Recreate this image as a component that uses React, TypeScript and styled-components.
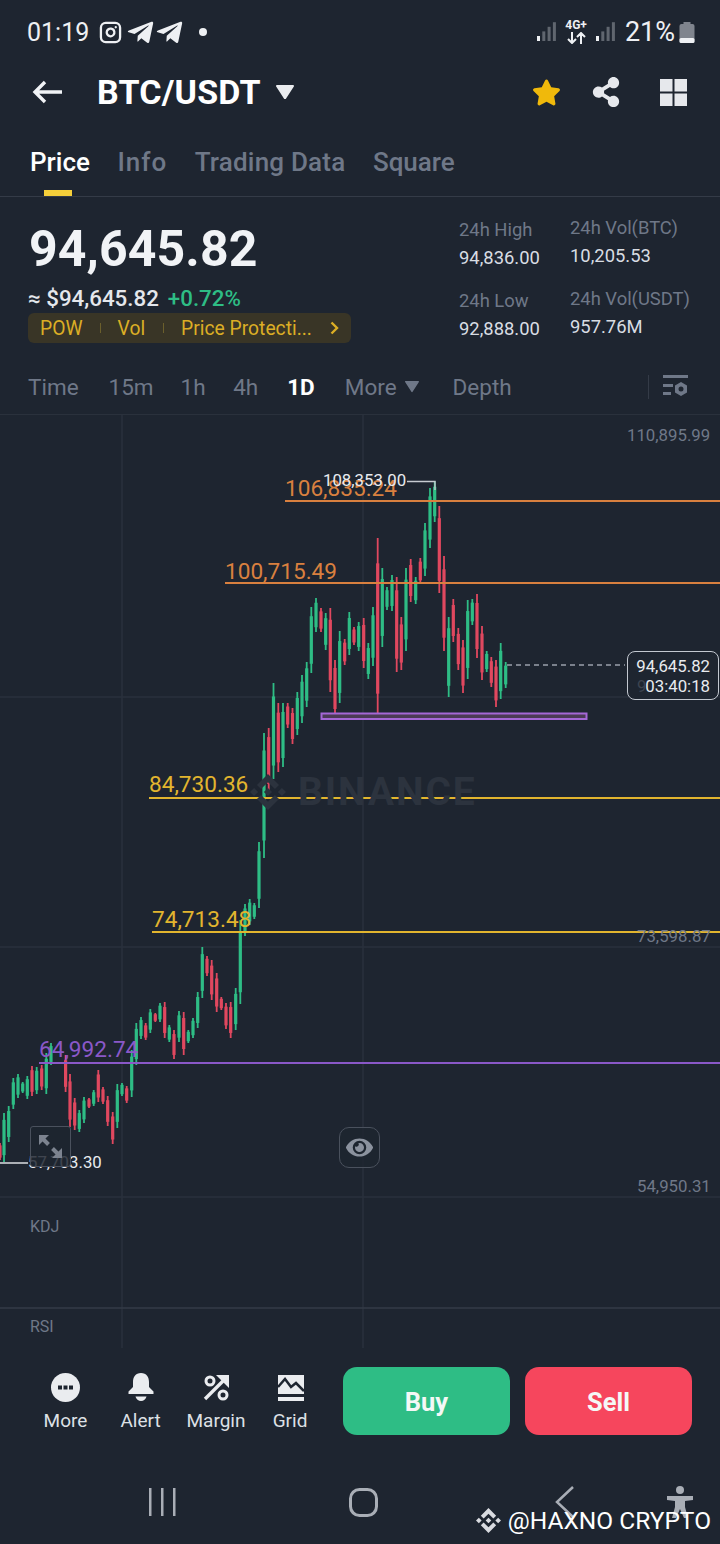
import React from "react";
import styled, { createGlobalStyle } from "styled-components";
import { FaTelegramPlane, FaStar, FaShareAlt, FaEye } from "react-icons/fa";
import { SiBinance } from "react-icons/si";
import { Instagram } from "lucide-react";

const BG = "#1e2530";
const GREEN = "#2ebd85";
const RED = "#e0485f";

type Candle = [number, "g" | "r", number, number];

const candles: Candle[] = [
  [0, "r", 1143, 1160], [4, "g", 1113, 1162], [8.7, "g", 1106, 1142], [13.3, "g", 1078, 1109],
  [18, "g", 1074, 1098], [22.7, "g", 1082, 1093], [27.3, "g", 1076, 1099], [32, "r", 1066, 1096],
  [36.7, "g", 1067, 1094], [41.7, "r", 1065, 1090], [46.3, "g", 1053, 1094], [51, "g", 1043, 1065],
  [65.6, "r", 1055, 1092], [70, "r", 1074, 1127], [74.7, "r", 1098, 1130], [79.3, "g", 1110, 1132],
  [84, "g", 1097, 1123], [89, "r", 1098, 1108], [93.7, "g", 1090, 1106], [98.3, "r", 1070, 1102],
  [103, "r", 1087, 1104], [107.7, "r", 1096, 1126], [112.7, "r", 1112, 1144], [117.3, "g", 1084, 1128],
  [122, "g", 1083, 1096], [126.7, "r", 1086, 1103], [131.7, "g", 1050, 1097], [136.3, "g", 1023, 1065],
  [141, "g", 1017, 1039], [145.7, "r", 1023, 1040], [150.3, "g", 1009, 1033], [155.3, "r", 1013, 1022],
  [160, "g", 1003, 1022], [164.7, "r", 1002, 1038], [169.3, "g", 1025, 1042], [174, "r", 1030, 1059],
  [179, "g", 1011, 1042], [183.7, "r", 1012, 1055], [188.3, "g", 1030, 1043], [193, "g", 1018, 1038],
  [197.7, "g", 992, 1028], [202.3, "g", 947, 998], [207, "r", 956, 976], [211.7, "r", 960, 1000],
  [216.7, "r", 973, 1012], [221.3, "r", 997, 1010], [226, "r", 1003, 1029], [230.7, "r", 1002, 1038],
  [235.7, "g", 988, 1030], [240.3, "g", 920, 1004], [245, "g", 904, 936], [249.7, "g", 899, 925],
  [254.3, "g", 903, 919], [259, "g", 842, 908], [264, "g", 733, 858], [268.7, "r", 728, 793],
  [273.5, "g", 683, 779], [278.3, "r", 703, 772], [283, "g", 703, 767], [287.7, "r", 703, 728],
  [292.5, "r", 708, 744], [297.3, "g", 692, 735], [302, "g", 675, 723], [306.7, "g", 662, 707],
  [311.3, "g", 607, 673], [316, "g", 598, 632], [321, "r", 608, 632], [325.7, "g", 613, 650],
  [330.3, "r", 608, 692], [335, "r", 660, 717], [339.7, "g", 631, 703], [344.7, "r", 639, 665],
  [349.3, "g", 612, 655], [354, "r", 627, 645], [358.7, "g", 622, 651], [363.7, "r", 618, 668],
  [368.3, "g", 643, 679], [373, "g", 607, 666], [377.7, "r", 538, 719], [382.3, "g", 568, 647],
  [387, "g", 587, 610], [392, "g", 575, 611], [396.7, "r", 577, 672], [401.3, "r", 617, 670],
  [406, "g", 568, 651], [410.7, "r", 559, 602], [415.7, "g", 577, 604], [420.3, "r", 558, 584],
  [425, "g", 523, 576], [430, "g", 488, 548], [434.7, "g", 481, 522], [439.3, "r", 506, 593],
  [444, "r", 556, 651], [448.7, "g", 617, 697], [453.3, "r", 599, 642], [458.3, "r", 628, 670],
  [463, "r", 640, 693], [467.7, "g", 600, 679], [472.3, "g", 599, 625], [477, "r", 594, 658],
  [482, "r", 626, 680], [486.7, "g", 651, 672], [491.3, "r", 657, 687], [496, "r", 660, 707],
  [500.7, "g", 643, 699], [505.7, "g", 662, 688],
];

const GlobalStyle = createGlobalStyle`
  html, body {
    margin: 0;
    background: ${BG};
  }
  * {
    box-sizing: border-box;
  }
`;

const Page = styled.div`
  position: relative;
  width: 720px;
  height: 1544px;
  overflow: hidden;
  display: flex;
  flex-direction: column;
  background: ${BG};
  color: #eaecef;
  font-family: Roboto, "Liberation Sans", sans-serif;
`;

const StatusBar = styled.div`
  height: 64px;
  padding: 0 25px 0 27px;
  display: flex;
  align-items: center;
  justify-content: space-between;
  color: #eef0f3;
`;

const StatusGroup = styled.div`
  display: flex;
  align-items: center;
`;

const Clock = styled.span`
  font-size: 25px;
  margin-right: 10px;
`;

const Percent = styled.span`
  font-size: 27px;
  margin: 0 4px 0 10px;
`;

const NetLabel = styled.div`
  margin: 0 9px;
  display: flex;
  flex-direction: column;
  align-items: center;
  gap: 1px;
  font-size: 12px;
  font-weight: 700;
  line-height: 11px;
`;

const Dot = styled.span`
  width: 8px;
  height: 8px;
  margin-left: 15px;
  border-radius: 50%;
  background: #eef0f3;
`;

const Header = styled.div`
  height: 56px;
  padding: 0 33px 0 32px;
  display: flex;
  align-items: center;
`;

const Pair = styled.h1`
  margin: 0 15px 0 35px;
  font-size: 34px;
  font-weight: 700;
  letter-spacing: 0.2px;
  color: #fff;
`;

const HeaderActions = styled.div`
  margin-left: auto;
  display: flex;
  align-items: center;
  gap: 30px;
`;

const GridSlot = styled.span`
  margin-left: 9px;
  display: flex;
`;

const Tabs = styled.div`
  height: 77px;
  padding: 8px 0 0 30px;
  display: flex;
  align-items: center;
  gap: 27.5px;
  border-bottom: 1px solid #343b47;
`;

const Tab = styled.span<{ $active?: boolean; $tracking?: number }>`
  position: relative;
  font-size: 26px;
  font-weight: 500;
  letter-spacing: ${(p) => p.$tracking ?? 0}px;
  color: ${(p) => (p.$active ? "#fff" : "#6f7888")};

  ${(p) =>
    p.$active &&
    `&::after {
      content: "";
      position: absolute;
      left: 14px;
      bottom: -19px;
      width: 28px;
      height: 6px;
      background: #f5cf3a;
    }`}
`;

const Summary = styled.div`
  height: 168px;
  padding: 19px 0 0 28px;
  display: flex;
`;

const PriceColumn = styled.div`
  width: 431px;
`;

const BigPrice = styled.div`
  margin-left: 1px;
  font-size: 50px;
  line-height: 66px;
  font-weight: 700;
  letter-spacing: 0.1px;
  color: #f1f3f6;
`;

const FiatLine = styled.div`
  margin-top: 4px;
  height: 24px;
  display: flex;
  gap: 9px;
  font-size: 22.3px;
  line-height: 24px;
  font-weight: 500;
  color: #e4e7ec;
`;

const Change = styled.span`
  color: ${GREEN};
`;

const TagRow = styled.div`
  margin-top: 3px;
  width: 323px;
  height: 30px;
  padding: 0 12px;
  display: flex;
  align-items: center;
  border-radius: 6px;
  background: #393526;
  color: #dcae25;
  font-size: 19.3px;
`;

const TagDivider = styled.span<{ $gap: number }>`
  width: 1px;
  height: 10px;
  margin: 0 ${(p) => p.$gap}px;
  background: #6b5f2c;
`;

const TagArrow = styled.span`
  margin-left: auto;
  display: flex;
`;

const Stats = styled.div`
  display: grid;
  grid-template-columns: 111px 1fr;
  grid-auto-rows: 71px;
`;

const Stat = styled.div<{ $shift?: number }>`
  display: flex;
  flex-direction: column;
  gap: 5px;
  margin-top: ${(p) => p.$shift ?? 0}px;
`;

const StatLabel = styled.span`
  font-size: 18.4px;
  line-height: 23px;
  color: #6f7888;
`;

const StatValue = styled.span`
  font-size: 18.4px;
  line-height: 23px;
  color: #d9dde3;
`;

const Intervals = styled.div`
  height: 50px;
  padding: 0 32px 5px 28px;
  display: flex;
  align-items: center;
  border-bottom: 1px solid #2a313c;
`;

const Interval = styled.span<{ $active?: boolean; $gap?: number }>`
  margin-right: ${(p) => p.$gap ?? 29}px;
  font-size: 22.5px;
  font-weight: ${(p) => (p.$active ? 700 : 400)};
  color: ${(p) => (p.$active ? "#fff" : "#6f7888")};
  display: flex;
  align-items: center;
  gap: 8px;
`;

const ToolGroup = styled.div`
  margin-left: auto;
  display: flex;
  align-items: center;
  gap: 14px;
`;

const ToolDivider = styled.span`
  width: 1px;
  height: 24px;
  background: #343b47;
`;

const Chart = styled.div`
  position: relative;
  height: 933px;
`;

const ChartCanvas = styled.svg`
  display: block;
`;

const ChartText = styled.text<{ $size: number; $fill: string }>`
  font-family: Roboto, "Liberation Sans", sans-serif;
  font-size: ${(p) => p.$size}px;
  fill: ${(p) => p.$fill};
`;

const PriceTag = styled.div`
  position: absolute;
  left: 627px;
  top: 236px;
  width: 92px;
  height: 49px;
  padding-right: 8px;
  border: 1px solid #c3c8d0;
  border-radius: 8px;
  background: ${BG};
  font-size: 16.8px;
  line-height: 20px;
  text-align: right;
  display: flex;
  flex-direction: column;
  justify-content: center;
  color: #e8ebef;
`;

const GhostDigit = styled.span`
  position: absolute;
  left: 9px;
  top: 24px;
  color: #3c434f;
`;

const OverlayButton = styled.div<{ $x: number; $y: number; $radius: number }>`
  position: absolute;
  left: ${(p) => p.$x}px;
  top: ${(p) => p.$y}px;
  width: 41px;
  height: 41px;
  display: flex;
  align-items: center;
  justify-content: center;
  border: 1px solid #4a515d;
  border-radius: ${(p) => p.$radius}px;
  background: rgba(30, 37, 48, 0.84);
  color: #8b929e;
`;

const Watermark = styled.div`
  position: absolute;
  left: 250px;
  top: 354px;
  display: flex;
  align-items: center;
  gap: 12px;
  font-size: 39px;
  font-weight: 700;
  letter-spacing: 1.9px;
  color: #2c333e;
`;

const ActionBar = styled.div`
  height: 112px;
  padding: 19px 28px 0 0;
  display: flex;
  align-items: flex-start;
`;

const Shortcuts = styled.div`
  width: 343px;
  padding: 1px 0 0 28px;
  display: flex;
`;

const Shortcut = styled.div<{ $width: number }>`
  width: ${(p) => p.$width}px;
  display: flex;
  flex-direction: column;
  align-items: center;
  gap: 3px;
  font-size: 19px;
  line-height: 24px;
  color: #dde0e5;
`;

const ShortcutIcon = styled.div`
  height: 38px;
  display: flex;
  align-items: center;
  justify-content: center;
  color: #eaecef;
`;

const TradeButton = styled.button<{ $color: string }>`
  flex: 1;
  height: 68px;
  padding-top: 3px;
  border: 0;
  border-radius: 14px;
  background: ${(p) => p.$color};
  color: #f4f8f6;
  font-family: inherit;
  font-size: 25.5px;
  font-weight: 700;
`;

const TradeButtons = styled.div`
  flex: 1;
  display: flex;
  gap: 15px;
`;

const NavBar = styled.div`
  position: relative;
  flex: 1;
  display: flex;
  align-items: center;
  color: #a9aeb6;
`;

const NavSlot = styled.div<{ $width: number }>`
  width: ${(p) => p.$width}px;
  display: flex;
  justify-content: flex-end;
`;

const Handle = styled.div`
  position: absolute;
  right: 9px;
  bottom: 9px;
  display: flex;
  align-items: center;
  gap: 7px;
  font-size: 24.5px;
  color: #fff;
`;

const HandleLogo = styled.span`
  display: flex;
  color: #d9dbe0;
`;

const Signal = ({ level }: { level: number }) => (
  <svg width="19" height="20" viewBox="0 0 19 20">
    {[0, 1, 2, 3].map((i) => (
      <rect
        key={i}
        x={i * 5.3}
        y={14 - i * 4.6}
        width="3"
        height={5 + i * 4.6}
        fill={i < level ? "#eef0f3" : "#60666f"}
      />
    ))}
  </svg>
);

const NetArrows = () => (
  <svg width="19" height="12" viewBox="0 0 19 12" fill="none" stroke="#eef0f3" strokeWidth="2">
    <path d="M5 0v11M1 7l4 4 4-4M14 12V1M10 5l4-4 4 4" />
  </svg>
);

const Battery = () => (
  <svg width="16" height="21" viewBox="0 0 16 21">
    <rect x="4.5" y="0" width="7" height="3" fill="#80858e" />
    <rect x="0.5" y="2" width="15" height="19" rx="2" fill="#80858e" />
    <rect x="0.5" y="16" width="15" height="5" rx="1.5" fill="#eef0f3" />
  </svg>
);

const BackArrow = () => (
  <svg width="30" height="24" viewBox="0 0 30 24" fill="none" stroke="#f1f3f6" strokeWidth="3.4">
    <path d="M30 12H3M13 2 3 12l10 10" />
  </svg>
);

const Caret = ({ size, color }: { size: number; color: string }) => (
  <svg width={size} height={size * 0.8} viewBox="0 0 10 8">
    <path d="M0.5 0.5h9L5 7.5z" fill={color} stroke={color} strokeLinejoin="round" />
  </svg>
);

const GridIcon = () => (
  <svg width="27" height="27" viewBox="0 0 27 27" fill="#e6e8ec">
    <rect width="12.5" height="12.5" />
    <rect x="14.5" width="12.5" height="12.5" />
    <rect y="14.5" width="12.5" height="12.5" />
    <rect x="14.5" y="14.5" width="12.5" height="12.5" />
  </svg>
);

const IndicatorIcon = () => (
  <svg width="25" height="24" viewBox="0 0 25 24" fill="#6f7888">
    <rect x="0" y="0" width="25" height="3" />
    <rect x="0" y="9" width="10" height="3" />
    <rect x="0" y="17" width="8" height="3" />
    <path d="M18 7l6 3.5v7L18 21l-6-3.5v-7zM18 11.5a2.5 2.5 0 1 0 0 5 2.5 2.5 0 0 0 0-5z" fillRule="evenodd" />
  </svg>
);

const ExpandIcon = () => (
  <svg width="25" height="25" viewBox="0 0 25 25" fill="#7c838f">
    <path d="M1 1h10L1 11z" />
    <path d="M24 24H14l10-10z" />
    <path d="M5 5l5.500 5.500M14.500 14.500 20 20" stroke="#7c838f" strokeWidth="4" />
  </svg>
);

const MoreIcon = () => (
  <svg width="29" height="29" viewBox="0 0 29 29">
    <circle cx="14.5" cy="14.5" r="14.5" fill="#eaecef" />
    <rect x="7" y="12.500" width="4" height="4" fill={BG} />
    <rect x="12.500" y="12.500" width="4" height="4" fill={BG} />
    <rect x="18" y="12.500" width="4" height="4" fill={BG} />
  </svg>
);

const BellIcon = () => (
  <svg width="26" height="28" viewBox="0 0 26 28" fill="#eaecef">
    <path d="M13 0c5.500 0 8 4 8 9v5l4.500 4.500V21H.5v-2.500L5 14V9c0-5 2.500-9 8-9z" />
    <path d="M7.500 23.500h11C18 26 15.500 28 13 28s-5-2-5.500-4.500z" />
  </svg>
);

const MarginIcon = () => (
  <svg width="27" height="27" viewBox="0 0 27 27" fill="none">
    <path d="M2 25 20 7" stroke="#eaecef" strokeWidth="3.400" />
    <path d="M13 1h13v13z" fill="#eaecef" />
    <circle cx="7" cy="7" r="4" stroke="#eaecef" strokeWidth="3" />
    <circle cx="20" cy="21" r="4" stroke="#eaecef" strokeWidth="3" />
  </svg>
);

const TradingGridIcon = () => (
  <svg width="27" height="27" viewBox="0 0 27 27" fill="#eaecef">
    <path d="M1 1h26v19H1z" />
    <path d="M1 13 8 5l6 8 5-4 8 8" fill="none" stroke={BG} strokeWidth="2.500" />
    <rect x="1" y="23" width="26" height="4" />
  </svg>
);

const RecentsIcon = () => (
  <svg width="27" height="28" viewBox="0 0 27 28" fill="#a9aeb6">
    <rect x="0" width="2.500" height="28" />
    <rect x="12" width="2.500" height="28" />
    <rect x="24" width="2.500" height="28" />
  </svg>
);

const HomeIcon = () => (
  <svg width="29" height="29" viewBox="0 0 29 29" fill="none" stroke="#a9aeb6" strokeWidth="3">
    <rect x="1.500" y="1.500" width="26" height="26" rx="9" />
  </svg>
);

const BackNavIcon = () => (
  <svg width="20" height="32" viewBox="0 0 20 32" fill="none" stroke="#a9aeb6" strokeWidth="2.500">
    <path d="M18 1 2 16l16 15" />
  </svg>
);

const AccessIcon = () => (
  <svg width="26" height="32" viewBox="0 0 26 32" fill="#a9aeb6">
    <circle cx="13" cy="4" r="4" />
    <path d="M0 10h26v4l-8 1v6l3 11h-4l-4-9-4 9H5l3-11v-6l-8-1z" />
  </svg>
);

function PriceChart() {
  return (
    <ChartCanvas width="720" height="933" viewBox="0 415 720 933">
      <g stroke="#2a313c" strokeWidth="1.500">
        <line x1="122" y1="415" x2="122" y2="1348" />
        <line x1="363" y1="415" x2="363" y2="1348" />
        <line x1="0" y1="697" x2="720" y2="697" />
        <line x1="0" y1="947" x2="720" y2="947" />
        <line x1="0" y1="1197" x2="720" y2="1197" />
        <line x1="0" y1="1308" x2="720" y2="1308" stroke="#343b47" />
      </g>

      {candles.map(([x, kind, top, bottom]) => {
        const height = bottom - top;
        return (
          <g key={x} fill={kind === "g" ? GREEN : RED}>
            <rect x={x - 0.9} y={top} width="1.800" height={height} />
            <rect x={x - 1.600} y={top + height * 0.14} width="3.200" height={height * 0.72} />
          </g>
        );
      })}

      <line x1="285" y1="501" x2="720" y2="501" stroke="#d9803f" strokeWidth="2" />
      <line x1="225" y1="583" x2="720" y2="583" stroke="#d9803f" strokeWidth="2" />
      <line x1="149" y1="798" x2="720" y2="798" stroke="#e2b52e" strokeWidth="2" />
      <line x1="152" y1="932" x2="720" y2="932" stroke="#e2b52e" strokeWidth="2" />
      <line x1="39" y1="1063" x2="720" y2="1063" stroke="#8a58c8" strokeWidth="2" />
      <rect x="321.500" y="713.500" width="265" height="5.500" fill="#4b3a55" stroke="#a467d6" strokeWidth="2" />
      <line x1="507" y1="665" x2="625" y2="665" stroke="#9aa0aa" strokeWidth="1.400" strokeDasharray="5 4" />
      <path d="M407 481.500H435V490" fill="none" stroke="#c7cbd1" strokeWidth="1.400" />
      <line x1="0" y1="1163" x2="28" y2="1163" stroke="#e8ebef" strokeWidth="1.400" />

      <ChartText x="285" y="496" $size={22.6} $fill="#d9803f">106,835.24</ChartText>
      <ChartText x="225" y="579" $size={22.6} $fill="#d9803f">100,715.49</ChartText>
      <ChartText x="149" y="792" $size={22.6} $fill="#e2b52e">84,730.36</ChartText>
      <ChartText x="152" y="927" $size={22.6} $fill="#e2b52e">74,713.48</ChartText>
      <ChartText x="39" y="1057" $size={22.6} $fill="#8a58c8">64,992.74</ChartText>
      <ChartText x="323" y="486" $size={16.8} $fill="#e8ebef">108,353.00</ChartText>
      <ChartText x="28" y="1168" $size={16.8} $fill="#e8ebef">57,703.30</ChartText>
      <ChartText x="627" y="441" $size={16.8} $fill="#6f7888">110,895.99</ChartText>
      <ChartText x="637" y="942" $size={16.8} $fill="#6f7888">73,598.87</ChartText>
      <ChartText x="637" y="1192" $size={16.8} $fill="#6f7888">54,950.31</ChartText>
      <ChartText x="30" y="1232" $size={16} $fill="#6f7888">KDJ</ChartText>
      <ChartText x="30" y="1332" $size={16} $fill="#6f7888">RSI</ChartText>
    </ChartCanvas>
  );
}

export default function App() {
  return (
    <Page>
      <GlobalStyle />
      <StatusBar>
        <StatusGroup>
          <Clock>01:19</Clock>
          <Instagram size={23} strokeWidth={2.4} />
          <FaTelegramPlane size={29} style={{ marginLeft: 4 }} />
          <FaTelegramPlane size={29} />
          <Dot />
        </StatusGroup>
        <StatusGroup>
          <Signal level={1} />
          <NetLabel>
            4G+
            <NetArrows />
          </NetLabel>
          <Signal level={1} />
          <Percent>21%</Percent>
          <Battery />
        </StatusGroup>
      </StatusBar>

      <Header>
        <BackArrow />
        <Pair>BTC/USDT</Pair>
        <Caret size={18} color="#eaecef" />
        <HeaderActions>
          <FaStar size={29} color="#f0b90b" />
          <FaShareAlt size={30} color="#e6e8ec" />
          <GridSlot>
            <GridIcon />
          </GridSlot>
        </HeaderActions>
      </Header>

      <Tabs>
        <Tab $active>Price</Tab>
        <Tab $tracking={1}>Info</Tab>
        <Tab $tracking={0.2}>Trading Data</Tab>
        <Tab>Square</Tab>
      </Tabs>

      <Summary>
        <PriceColumn>
          <BigPrice>94,645.82</BigPrice>
          <FiatLine>
            ≈ $94,645.82
            <Change>+0.72%</Change>
          </FiatLine>
          <TagRow>
            POW
            <TagDivider $gap={17} />
            Vol
            <TagDivider $gap={17.5} />
            Price Protecti...
            <TagArrow>
              <svg width="9" height="14" viewBox="0 0 9 14" fill="none" stroke="#dcae25" strokeWidth="2.400">
                <path d="M1.500 1.500 7 7l-5.500 5.500" />
              </svg>
            </TagArrow>
          </TagRow>
        </PriceColumn>
        <Stats>
          <Stat $shift={2}>
            <StatLabel>24h High</StatLabel>
            <StatValue>94,836.00</StatValue>
          </Stat>
          <Stat>
            <StatLabel>24h Vol(BTC)</StatLabel>
            <StatValue>10,205.53</StatValue>
          </Stat>
          <Stat $shift={2}>
            <StatLabel>24h Low</StatLabel>
            <StatValue>92,888.00</StatValue>
          </Stat>
          <Stat>
            <StatLabel>24h Vol(USDT)</StatLabel>
            <StatValue>957.76M</StatValue>
          </Stat>
        </Stats>
      </Summary>

      <Intervals>
        <Interval $gap={30}>Time</Interval>
        <Interval $gap={27}>15m</Interval>
        <Interval $gap={27.5}>1h</Interval>
        <Interval>4h</Interval>
        <Interval $active $gap={30}>1D</Interval>
        <Interval $gap={34}>
          More <Caret size={14} color="#6f7888" />
        </Interval>
        <Interval>Depth</Interval>
        <ToolGroup>
          <ToolDivider />
          <IndicatorIcon />
        </ToolGroup>
      </Intervals>

      <Chart>
        <Watermark>
          <SiBinance size={36} />
          BINANCE
        </Watermark>
        <PriceChart />
        <PriceTag>
          <GhostDigit>9</GhostDigit>
          <span>94,645.82</span>
          <span>03:40:18</span>
        </PriceTag>
        <OverlayButton $x={30} $y={711} $radius={3}>
          <ExpandIcon />
        </OverlayButton>
        <OverlayButton $x={339} $y={712} $radius={10}>
          <FaEye size={27} />
        </OverlayButton>
      </Chart>

      <ActionBar>
        <Shortcuts>
          <Shortcut $width={75}>
            <ShortcutIcon>
              <MoreIcon />
            </ShortcutIcon>
            More
          </Shortcut>
          <Shortcut $width={75}>
            <ShortcutIcon>
              <BellIcon />
            </ShortcutIcon>
            Alert
          </Shortcut>
          <Shortcut $width={76}>
            <ShortcutIcon>
              <MarginIcon />
            </ShortcutIcon>
            Margin
          </Shortcut>
          <Shortcut $width={72}>
            <ShortcutIcon>
              <TradingGridIcon />
            </ShortcutIcon>
            Grid
          </Shortcut>
        </Shortcuts>
        <TradeButtons>
          <TradeButton $color={GREEN}>Buy</TradeButton>
          <TradeButton $color="#f6465d">Sell</TradeButton>
        </TradeButtons>
      </ActionBar>

      <NavBar>
        <NavSlot $width={176}>
          <RecentsIcon />
        </NavSlot>
        <NavSlot $width={202}>
          <HomeIcon />
        </NavSlot>
        <NavSlot $width={197}>
          <BackNavIcon />
        </NavSlot>
        <NavSlot $width={118}>
          <AccessIcon />
        </NavSlot>
        <Handle>
          <HandleLogo>
            <SiBinance size={25} />
          </HandleLogo>
          @HAXNO CRYPTO
        </Handle>
      </NavBar>
    </Page>
  );
}
